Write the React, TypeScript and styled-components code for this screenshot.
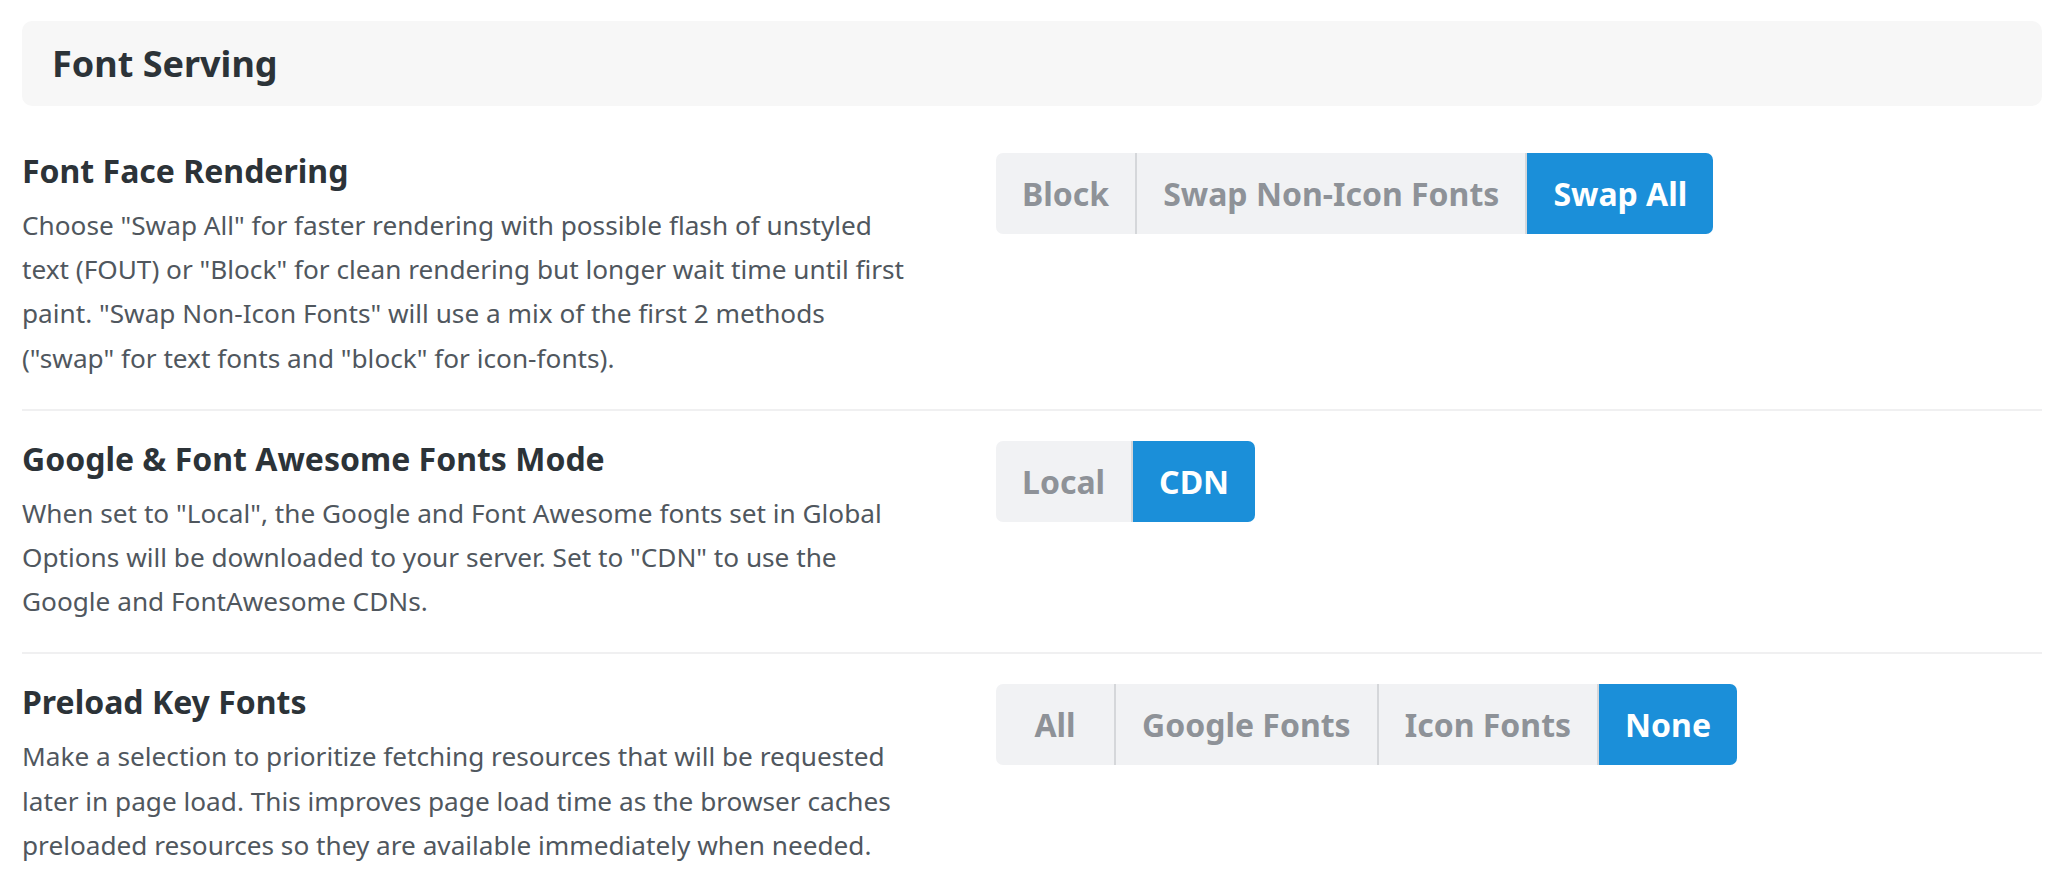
import styled, { createGlobalStyle } from 'styled-components'

const GlobalStyle = createGlobalStyle`
  body {
    margin: 0;
    background: #fff;
    font-family: 'Noto Sans', 'Open Sans', sans-serif;
  }
`

const Page = styled.div`
  padding: 21px 17px 0 22px;
`

const SectionHeader = styled.div`
  height: 85px;
  display: flex;
  align-items: center;
  padding: 0 30px;
  background: #f7f7f7;
  border-radius: 10px;
  margin-bottom: 17px;
`

const SectionTitle = styled.h2`
  margin: 0;
  font-size: 36px;
  font-weight: 700;
  line-height: 1;
  color: #2c3338;
`

const Row = styled.div<{ $last?: boolean }>`
  display: grid;
  grid-template-columns: 974px 1fr;
  padding: 26px 0 29px;
  border-bottom: 2px solid ${(p) => (p.$last ? 'transparent' : '#f0f0f1')};
`

const Label = styled.h3`
  margin: 0;
  font-size: 32px;
  font-weight: 700;
  line-height: 44px;
  color: #2c3338;
`

const Description = styled.p`
  margin: 10px 0 0;
  max-width: 890px;
  font-size: 26.2px;
  line-height: 44.2px;
  color: #50575e;
`

const ButtonGroup = styled.div`
  display: inline-flex;
  align-self: start;
  justify-self: start;
  height: 81px;
  margin-top: 4px;
  border-radius: 7px;
  overflow: hidden;
`

const Choice = styled.button<{ $active?: boolean }>`
  min-width: 118px;
  padding: 0 26px;
  border: none;
  border-left: 2px solid #d5d7da;
  background: ${(p) => (p.$active ? '#1b8fd9' : '#f1f2f4')};
  color: ${(p) => (p.$active ? '#fff' : '#8e9298')};
  font-family: inherit;
  font-size: 32px;
  font-weight: 700;
  cursor: pointer;

  &:first-child {
    border-left: none;
  }
`

type Setting = {
  title: string
  text: string
  options: string[]
  active: string
}

const settings: Setting[] = [
  {
    title: 'Font Face Rendering',
    text: 'Choose "Swap All" for faster rendering with possible flash of unstyled text (FOUT) or "Block" for clean rendering but longer wait time until first paint. "Swap Non-Icon Fonts" will use a mix of the first 2 methods ("swap" for text fonts and "block" for icon-fonts).',
    options: ['Block', 'Swap Non-Icon Fonts', 'Swap All'],
    active: 'Swap All',
  },
  {
    title: 'Google & Font Awesome Fonts Mode',
    text: 'When set to "Local", the Google and Font Awesome fonts set in Global Options will be downloaded to your server. Set to "CDN" to use the Google and FontAwesome CDNs.',
    options: ['Local', 'CDN'],
    active: 'CDN',
  },
  {
    title: 'Preload Key Fonts',
    text: 'Make a selection to prioritize fetching resources that will be requested later in page load. This improves page load time as the browser caches preloaded resources so they are available immediately when needed.',
    options: ['All', 'Google Fonts', 'Icon Fonts', 'None'],
    active: 'None',
  },
]

export default function App() {
  return (
    <>
      <GlobalStyle />
      <Page>
        <SectionHeader>
          <SectionTitle>Font Serving</SectionTitle>
        </SectionHeader>
        {settings.map((s, i) => (
          <Row key={s.title} $last={i === settings.length - 1}>
            <div>
              <Label>{s.title}</Label>
              <Description>{s.text}</Description>
            </div>
            <ButtonGroup>
              {s.options.map((o) => (
                <Choice key={o} $active={o === s.active}>
                  {o}
                </Choice>
              ))}
            </ButtonGroup>
          </Row>
        ))}
      </Page>
    </>
  )
}
